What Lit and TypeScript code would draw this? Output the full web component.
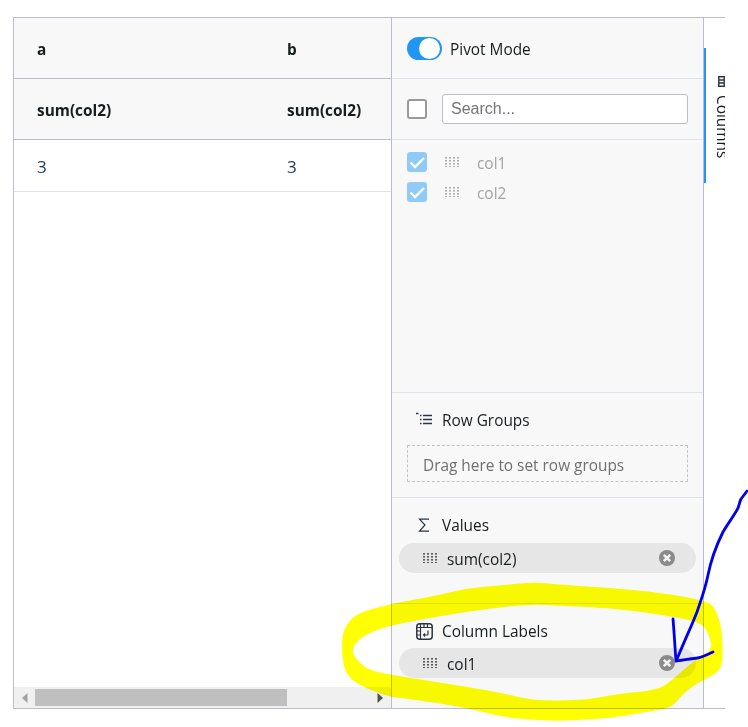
import { LitElement, html, css, svg } from "lit";
import { customElement } from "lit/decorators.js";

type Pt = [number, number];

// Closed, smoothed outline through the traced points of the hand-drawn marker.
const smooth = (pts: Pt[]) => {
  const mid = (a: Pt, b: Pt): Pt => [(a[0] + b[0]) / 2, (a[1] + b[1]) / 2];
  const start = mid(pts[pts.length - 1], pts[0]);
  let d = `M${start[0]} ${start[1]}`;
  pts.forEach((p, i) => {
    const m = mid(p, pts[(i + 1) % pts.length]);
    d += `Q${p[0]} ${p[1]} ${m[0]} ${m[1]}`;
  });
  return d + "Z";
};

const outer: Pt[] = [
  [342, 655], [342, 635], [348, 622], [358, 613], [390, 604], [435, 596], [468, 588], [505, 585],
  [535, 582], [563, 585], [613, 588], [663, 593], [707, 601], [715, 608], [721, 625], [723, 648],
  [722, 665], [717, 673], [703, 680], [687, 690], [678, 700], [670, 708], [647, 712], [610, 718],
  [563, 721], [535, 720], [502, 717], [468, 708], [418, 700], [392, 697], [378, 693], [355, 683], [345, 672],
];
const inner: Pt[] = [
  [352, 652], [355, 643], [368, 633], [392, 625], [435, 617], [478, 610], [530, 604], [563, 606],
  [613, 608], [663, 615], [700, 622], [708, 632], [713, 650], [697, 658], [670, 682], [657, 690],
  [617, 694], [587, 700], [535, 701], [502, 693], [468, 687], [418, 679], [392, 675], [368, 670], [357, 660],
];

const grip = html`<svg class="grip" width="14" height="10" viewBox="0 0 14 10">
  ${[0, 3, 6, 9].flatMap((y) => [0, 4, 8, 12].map((x) => svg`<rect x=${x} y=${y} width="2" height="1.6" fill="currentColor"></rect>`))}
</svg>`;

const closeIcon = html`<svg class="close" width="16" height="16" viewBox="0 0 16 16">
  <circle cx="8" cy="8" r="8" fill="#8a8a8a"></circle>
  <path d="M4.8 4.8l6.4 6.4M11.2 4.8l-6.4 6.4" stroke="#f2f2f2" stroke-width="2.6" stroke-linecap="butt"></path>
</svg>`;

const check = html`<svg width="20" height="20" viewBox="0 0 20 20">
  <path d="M3.5 10.5l4.5 4.5 9-9" fill="none" stroke="#fff" stroke-width="2.4"></path>
</svg>`;

@customElement("app-root")
export class AppRoot extends LitElement {
  static styles = css`
    :host {
      display: block;
      position: relative;
      width: 748px;
      height: 727px;
      overflow: hidden;
      background: #fff;
      font-family: "Open Sans", "Noto Sans", sans-serif;
      font-size: 15.4px;
      color: #181d1f;
    }
    .frame {
      box-sizing: border-box;
      margin: 17px 0 0 13px;
      width: 712px;
      height: 692px;
      display: flex;
      border-top: 1px solid #babfc7;
      border-bottom: 1px solid #babfc7;
      border-left: 1px solid #babfc7;
    }
    .grid {
      width: 377px;
      display: flex;
      flex-direction: column;
      overflow: hidden;
      flex: none;
    }
    .row {
      display: flex;
      flex: none;
      box-sizing: border-box;
      align-items: center;
      border-bottom: 1px solid #babfc7;
      height: 61px;
      background: #f8f8f8;
      font-weight: 700;
    }
    .row.body {
      height: 52px;
      background: #fff;
      border-bottom-color: #dde2eb;
      font-weight: 400;
      font-size: 17px;
      color: #1b3358;
    }
    .cell {
      flex: none;
      width: 250px;
      box-sizing: border-box;
      padding: 2px 0 0 23px;
    }
    .viewport { flex: 1; }
    .hscroll {
      height: 21px;
      flex: none;
      background: #f0f0f0;
      display: flex;
      align-items: center;
      box-sizing: border-box;
      padding: 0 8px;
    }
    .arrow { flex: none; }
    .thumb {
      margin-left: 7px;
      width: 252px;
      height: 17px;
      background: #bfbfbf;
    }
    .spacer { flex: 1; }
    .panel {
      box-sizing: border-box;
      width: 313px;
      flex: none;
      background: #f8f8f8;
      border-left: 1px solid #babfc7;
      border-right: 1px solid #babfc7;
      display: flex;
      flex-direction: column;
    }
    .pivot {
      height: 61px;
      flex: none;
      box-sizing: border-box;
      border-bottom: 1px solid #dde2eb;
      display: flex;
      align-items: center;
      padding-left: 15px;
      gap: 8px;
    }
    .pivot-label { padding-top: 2px; }
    .toggle {
      width: 35px;
      height: 23px;
      border-radius: 12px;
      background: #2196f3;
      display: flex;
      align-items: center;
      justify-content: flex-end;
      padding-right: 2px;
      box-sizing: border-box;
    }
    .knob {
      width: 21px;
      height: 21px;
      border-radius: 50%;
      background: #fff;
    }
    .search {
      height: 61px;
      flex: none;
      box-sizing: border-box;
      border-bottom: 1px solid #dde2eb;
      display: flex;
      align-items: center;
      padding-left: 15px;
      gap: 15px;
    }
    .box {
      box-sizing: border-box;
      width: 20px;
      height: 20px;
      border: 2.5px solid #999;
      border-radius: 3px;
      background: #fff;
      flex: none;
    }
    .input {
      box-sizing: border-box;
      width: 246px;
      height: 30px;
      border: 1px solid #babfc7;
      border-radius: 3px;
      background: #fff;
      font-family: "Liberation Sans", Arial, sans-serif;
      font-size: 16px;
      color: #757575;
      padding-left: 8px;
      display: flex;
      align-items: center;
    }
    .list {
      height: 253px;
      flex: none;
      box-sizing: border-box;
      padding: 12px 0 0 15px;
      border-bottom: 1px solid #dde2eb;
      display: flex;
      flex-direction: column;
      gap: 10px;
    }
    .item {
      display: flex;
      align-items: center;
      height: 20px;
      color: #a3a3a3;
    }
    .item span { padding-top: 2px; }
    .on {
      width: 20px;
      height: 20px;
      border-radius: 3px;
      background: #90caf9;
      flex: none;
      display: flex;
    }
    .item .grip { margin: 0 18px 0 18px; color: #b0b0b0; }
    .section {
      flex: none;
      box-sizing: border-box;
      border-bottom: 1px solid #dde2eb;
    }
    .section.groups { height: 105px; }
    .section.values { height: 106px; }
    .section.labels { flex: 1; border-bottom: 0; }
    .title {
      display: flex;
      align-items: center;
      height: 20px;
      margin: 17px 0 0 24px;
      gap: 9px;
    }
    .icon { width: 17px; height: 17px; flex: none; }
    .drop {
      box-sizing: border-box;
      margin: 15px 0 0 15px;
      width: 281px;
      height: 37px;
      border: 1px dashed #c4c4c4;
      padding: 3px 0 0 15px;
      display: flex;
      align-items: center;
      color: #6f6f6f;
    }
    .pill {
      box-sizing: border-box;
      margin: 8px 0 0 7px;
      width: 297px;
      height: 30px;
      border-radius: 15px;
      background: #e6e6e6;
      display: flex;
      align-items: center;
      padding: 0 21px 0 24px;
    }
    .labels .pill { margin-top: 7px; }
    .pill .grip { color: #5c5c5c; margin-right: 10px; }
    .pill .label { flex: 1; padding-top: 2px; }
    .tabs {
      flex: 1;
      min-width: 0;
      overflow: hidden;
      padding-top: 30px;
    }
    .tab {
      box-sizing: border-box;
      height: 135px;
      border-left: 2px solid #2196f3;
      padding: 28px 0 0 12px;
      display: flex;
      flex-direction: column;
      gap: 8px;
      align-items: flex-start;
      width: 40px;
    }
    .tab span {
      writing-mode: vertical-rl;
      line-height: 19px;
      white-space: nowrap;
      margin-left: -5px;
    }
    .notes {
      position: absolute;
      inset: 0;
      pointer-events: none;
    }
    .marker { mix-blend-mode: multiply; }
  `;

  render() {
    return html`
      <div class="frame">
        <div class="grid">
          <div class="row"><div class="cell">a</div><div class="cell">b</div></div>
          <div class="row"><div class="cell">sum(col2)</div><div class="cell">sum(col2)</div></div>
          <div class="row body"><div class="cell">3</div><div class="cell">3</div></div>
          <div class="viewport"></div>
          <div class="hscroll">
            <svg class="arrow" width="6" height="10" viewBox="0 0 6 10"><path d="M5.5 0v10L0 5z" fill="#a3a3a3"></path></svg>
            <div class="thumb"></div>
            <div class="spacer"></div>
            <svg class="arrow" width="6" height="10" viewBox="0 0 6 10"><path d="M.5 0v10L6 5z" fill="#505050"></path></svg>
          </div>
        </div>
        <div class="panel">
          <div class="pivot">
            <div class="toggle"><div class="knob"></div></div>
            <div class="pivot-label">Pivot Mode</div>
          </div>
          <div class="search">
            <div class="box"></div>
            <div class="input">Search...</div>
          </div>
          <div class="list">
            <div class="item"><div class="on">${check}</div>${grip}<span>col1</span></div>
            <div class="item"><div class="on">${check}</div>${grip}<span>col2</span></div>
          </div>
          <div class="section groups">
            <div class="title">
              <svg class="icon" viewBox="0 0 17 17"><path d="M0 1.5h2.5M4 3.5h1.5M7 3.5h9M4 7.5h1.5M7 7.5h9M4 11.5h1.5M7 11.5h9" stroke="#2c3440" stroke-width="1.3" fill="none"></path></svg>
              <span>Row Groups</span>
            </div>
            <div class="drop">Drag here to set row groups</div>
          </div>
          <div class="section values">
            <div class="title">
              <svg class="icon" viewBox="0 0 17 17"><path d="M13 2.2H3.5L9 8 3.5 14.2H13" stroke="#2c3440" stroke-width="1.2" fill="none"></path></svg>
              <span>Values</span>
            </div>
            <div class="pill">${grip}<span class="label">sum(col2)</span>${closeIcon}</div>
          </div>
          <div class="section labels">
            <div class="title">
              <svg class="icon" viewBox="0 0 17 17"><rect x=".8" y=".8" width="15.4" height="15.4" rx="3" stroke="#2c3440" stroke-width="1.5" fill="none"></rect><path d="M1 4.5h15M4.5 1v15M1 8h3.5M1 12h3.5M8 1v3.5M11.5 1v3.5M12 7.5v3.5a1 1 0 0 1-1 1H7.5M9 10.5L7.5 12 9 13.5" stroke="#2c3440" stroke-width="1.2" fill="none"></path></svg>
              <span>Column Labels</span>
            </div>
            <div class="pill">${grip}<span class="label">col1</span>${closeIcon}</div>
          </div>
        </div>
        <div class="tabs">
          <div class="tab">
            <svg width="7" height="11" viewBox="0 0 7 11"><path d="M.75.75h5.5v9.5H.75zM.75 4h5.5M.75 7h5.5" stroke="#2c3440" stroke-width="1.4" fill="none"></path></svg>
            <span>Columns</span>
          </div>
        </div>
      </div>
      <svg class="notes" width="748" height="727" viewBox="0 0 748 727">
        <path class="marker" fill="#ffff00" fill-rule="evenodd" d=${smooth(outer) + smooth(inner)}></path>
        <path fill="none" stroke="#0000ee" stroke-width="2.8" stroke-linecap="round" stroke-linejoin="round" d="M747 491L741 499C739 503 739 507 737 510C731 520 727 525 723 532C716 546 711 560 708 575C705 590 701 600 697 612C692 625 687 635 677 659"></path>
        <path fill="none" stroke="#0000ee" stroke-width="2.8" stroke-linecap="round" stroke-linejoin="round" d="M673 619C674 630 675 648 676 661M713 652C708 654 703 657 697 658C690 659 682 660 676 661"></path>
      </svg>
    `;
  }
}
